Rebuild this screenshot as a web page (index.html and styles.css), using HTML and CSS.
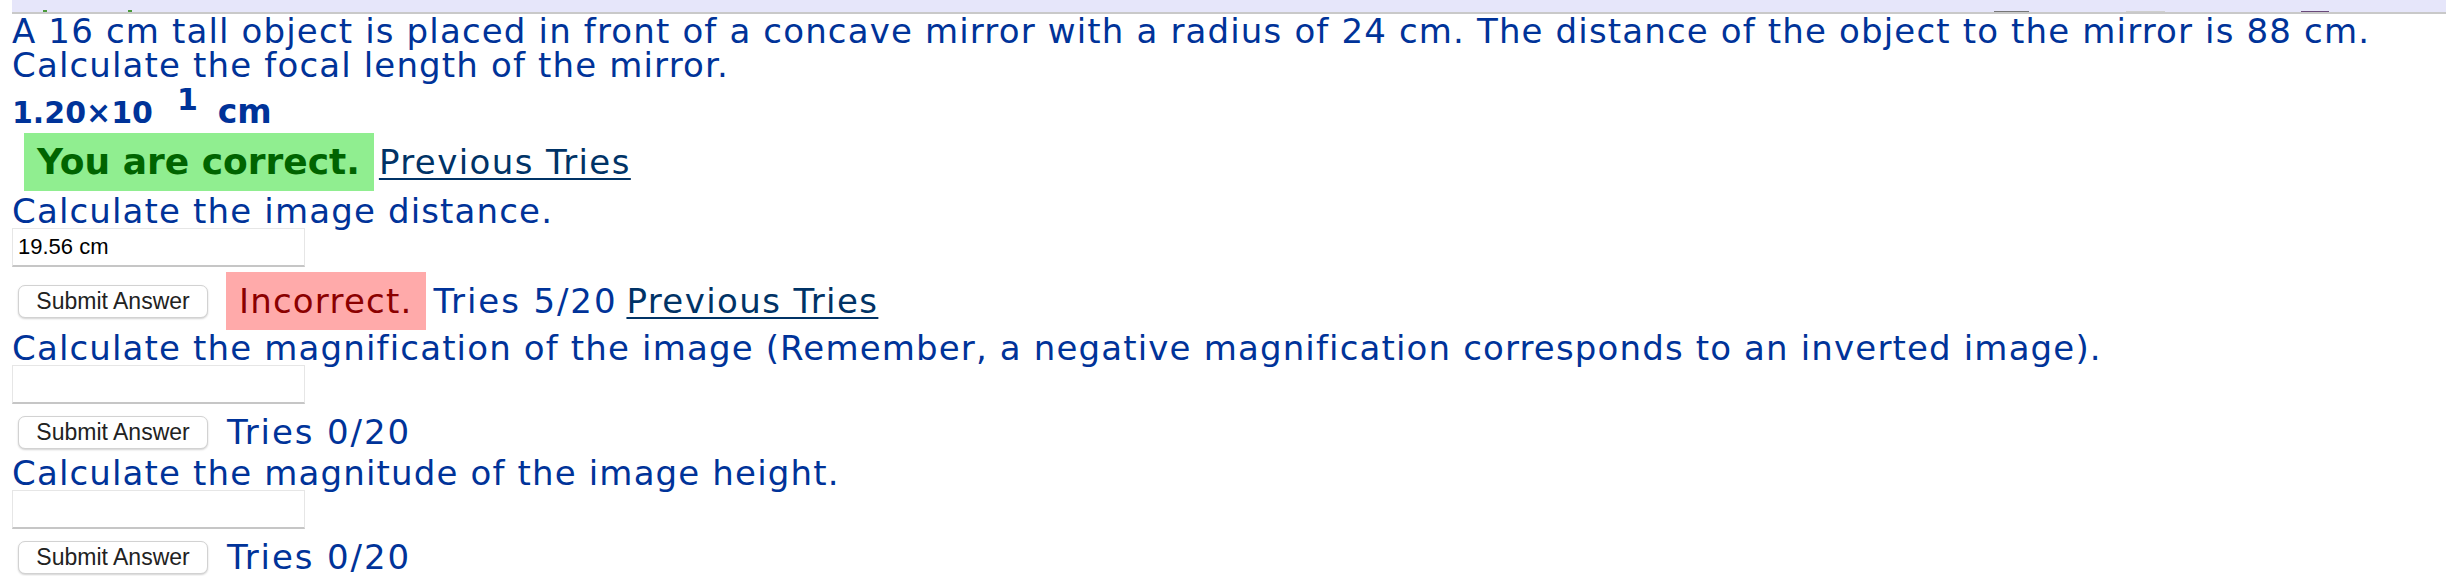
FILE: index.html
```html
<!DOCTYPE html>
<html>
<head>
<meta charset="utf-8">
<title>Problem</title>
<link rel="stylesheet" href="styles.css">
</head>
<body>
<div class="page">
  <div class="toolbar">
    <span class="tick tick-g1"></span>
    <span class="tick tick-g2"></span>
    <span class="tick tick-dark"></span>
    <span class="tick tick-light"></span>
    <span class="tick tick-purple"></span>
  </div>
  <div class="problem">
    <p class="text">A 16 cm tall object is placed in front of a concave mirror with a radius of 24 cm. The distance of the object to the mirror is 88 cm.<br>Calculate the focal length of the mirror.</p>
    <div class="answer">1.20×10<sup class="exp">1</sup><span class="unit">cm</span></div>
    <div class="row row-correct">
      <span class="correct">You are correct.</span>
      <a class="prev" href="#">Previous Tries</a>
    </div>

    <div class="text">Calculate the image distance.</div>
    <input class="field" type="text" value="19.56 cm">
    <div class="row">
      <button class="submit" type="button">Submit Answer</button>
      <span class="incorrect">Incorrect.</span>
      <span class="tries tries-after">Tries 5/20</span>
      <a class="prev prev-after" href="#">Previous Tries</a>
    </div>

    <div class="text">Calculate the magnification of the image (Remember, a negative magnification corresponds to an inverted image).</div>
    <input class="field" type="text" value="">
    <div class="row">
      <button class="submit" type="button">Submit Answer</button>
      <span class="tries">Tries 0/20</span>
    </div>

    <div class="text">Calculate the magnitude of the image height.</div>
    <input class="field" type="text" value="">
    <div class="row">
      <button class="submit" type="button">Submit Answer</button>
      <span class="tries">Tries 0/20</span>
    </div>
  </div>
</div>
</body>
</html>
```

FILE: styles.css
```css
html, body {
  margin: 0;
  padding: 0;
  background: #ffffff;
}

.page {
  padding: 0 0 0 12px;
  font-family: "DejaVu Sans", Verdana, sans-serif;
  color: #003399;
}

.toolbar {
  display: flex;
  align-items: flex-end;
  height: 12px;
  background: #e6e6fa;
  border-bottom: 2px solid #c9c9c9;
}

.tick {
  display: block;
  height: 2px;
}
.tick-g1 { margin-left: 31px; width: 4px; background: #4a9a3a; }
.tick-g2 { margin-left: 81px; width: 4px; background: #4a9a3a; }
.tick-dark { margin-left: 1862px; width: 35px; height: 1px; background: #777777; }
.tick-light { margin-left: 97px; width: 39px; height: 1px; background: #cfcfcf; }
.tick-purple { margin-left: 136px; width: 28px; height: 1px; background: #6a4a7a; }

.problem {
  display: flex;
  flex-direction: column;
  align-items: flex-start;
}

.text {
  margin: 0;
  font-size: 34px;
  line-height: 34px;
  letter-spacing: 1.15px;
  white-space: nowrap;
}

.answer {
  margin-top: 12px;
  font-size: 30px;
  line-height: 36px;
  font-weight: bold;
  white-space: nowrap;
}

.exp {
  font-size: 30px;
  line-height: 0;
  vertical-align: 13px;
  margin-left: 24px;
}

.unit {
  margin-left: 20px;
  font-size: 33px;
}

.row {
  display: flex;
  align-items: center;
  padding: 5px 0 1px;
  min-height: 46px;
  font-size: 34px;
  line-height: 34px;
  letter-spacing: 1.2px;
  white-space: nowrap;
}

.row-correct {
  padding: 2px 0 3px;
  min-height: 0;
}

.correct {
  margin-left: 12px;
  padding: 0 14px 0 13px;
  background: #90ee90;
  color: #006400;
  font-weight: bold;
  font-size: 36px;
  line-height: 58px;
  letter-spacing: 0;
}

.incorrect {
  margin-left: 18px;
  padding: 0 14px 0 13px;
  background: #ffaaaa;
  color: #8b0000;
  font-size: 34px;
  line-height: 58px;
}

.prev {
  margin-left: 5px;
  color: #003366;
  letter-spacing: 1.4px;
  text-decoration: underline;
  text-decoration-thickness: 2px;
  text-underline-offset: 4px;
}

.prev-after {
  margin-left: 9px;
}

.tries {
  margin-left: 19px;
  color: #003399;
  letter-spacing: 1.9px;
}

.tries-after {
  margin-left: 7px;
}

.field {
  display: block;
  box-sizing: border-box;
  width: 293px;
  height: 39px;
  margin: 0;
  padding: 0 5px;
  border: 1px solid #e6e6e6;
  border-bottom: 2px solid #c6c6c6;
  background: #ffffff;
  font-family: "Liberation Sans", Arial, sans-serif;
  font-size: 22px;
  color: #000000;
  outline: none;
}

.submit {
  box-sizing: border-box;
  width: 190px;
  height: 33px;
  margin: 0 0 0 6px;
  padding: 0;
  border: 1px solid #d2d2d2;
  border-radius: 7px;
  background: #ffffff;
  box-shadow: 0 1px 2px rgba(0, 0, 0, 0.18);
  font-family: "Liberation Sans", Arial, sans-serif;
  font-size: 23px;
  letter-spacing: 0;
  color: #222222;
}
```
